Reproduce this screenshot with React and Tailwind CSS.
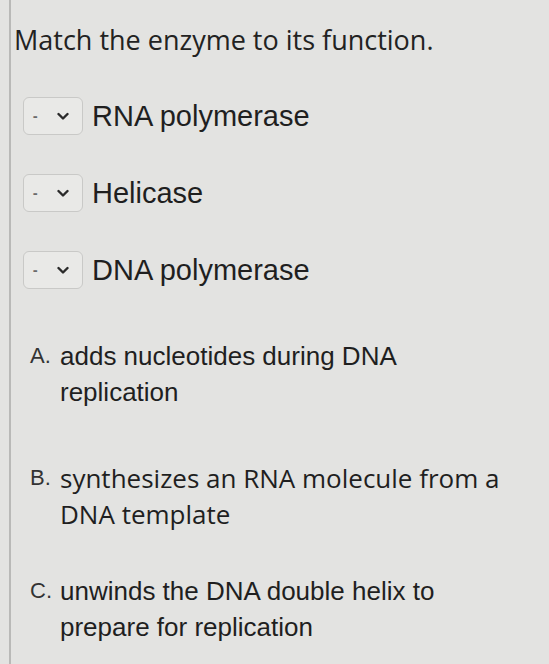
import { useState } from "react";

const enzymes = ["RNA polymerase", "Helicase", "DNA polymerase"];

const functions = [
  { letter: "A.", lines: ["adds nucleotides during DNA", "replication"], font: "font-['Liberation_Sans',Arial,sans-serif]", gap: "" },
  { letter: "B.", lines: ["synthesizes an RNA molecule from a", "DNA template"], font: "font-['Open_Sans',sans-serif]", gap: "mt-[50px]" },
  { letter: "C.", lines: ["unwinds the DNA double helix to", "prepare for replication"], font: "font-['Liberation_Sans',Arial,sans-serif]", gap: "mt-[41px]" },
];

function Chevron() {
  return (
    <svg width="12" height="9" viewBox="0 0 12 9" fill="none">
      <path d="M1.5 2 L6 6.5 L10.5 2" stroke="#2a2a2a" strokeWidth="2.4" strokeLinecap="round" strokeLinejoin="round" />
    </svg>
  );
}

function MatchSelect({ value, onChange }) {
  return (
    <div className="relative w-[60px] h-[38px] rounded-[6px] border border-[#c9c9c7] bg-[#e9e9e7] flex items-center pl-[9px] gap-[20px]">
      <span className="text-[#6a6a6a] text-[14px] font-bold leading-none">{value || "-"}</span>
      <Chevron />
      <select
        value={value}
        onChange={(e) => onChange(e.target.value)}
        className="absolute inset-0 opacity-0 cursor-pointer"
      >
        <option value="">-</option>
        <option value="A">A</option>
        <option value="B">B</option>
        <option value="C">C</option>
      </select>
    </div>
  );
}

export default function App() {
  const [answers, setAnswers] = useState(["", "", ""]);

  const setAnswer = (i, v) =>
    setAnswers((prev) => prev.map((a, j) => (j === i ? v : a)));

  return (
    <div className="w-[549px] h-[664px] overflow-hidden bg-[#e3e3e1] pl-[9px]">
      <div className="h-full border-l-2 border-[#b9b9b7] pt-[20px] text-[#1f1f1f]">

        {/* QUESTION */}
        <h1 className="pl-[3px] font-['Open_Sans',sans-serif] text-[27px] font-medium leading-[40px] text-[#222]">
          Match the enzyme to its function.
        </h1>

        {/* ENZYMES */}
        <div className="mt-[37px] pl-[12px] flex flex-col gap-[39px]">
          {enzymes.map((name, i) => (
            <div key={name} className="flex items-center gap-[9px]">
              <MatchSelect value={answers[i]} onChange={(v) => setAnswer(i, v)} />
              <span className="font-['Liberation_Sans',Arial,sans-serif] text-[29px] leading-none">
                {name}
              </span>
            </div>
          ))}
        </div>

        {/* FUNCTIONS */}
        <div className="mt-[49px] pl-[19px] flex flex-col">
          {functions.map((f) => (
            <div key={f.letter} className={`flex items-start ${f.gap}`}>
              <span className="w-[30px] font-['Liberation_Sans',Arial,sans-serif] text-[22px] leading-[36px] text-[#333]">
                {f.letter}
              </span>
              <div className={`${f.font} text-[26px] leading-[36px]`}>
                {f.lines.map((line) => (
                  <div key={line}>{line}</div>
                ))}
              </div>
            </div>
          ))}
        </div>

      </div>
    </div>
  );
}
